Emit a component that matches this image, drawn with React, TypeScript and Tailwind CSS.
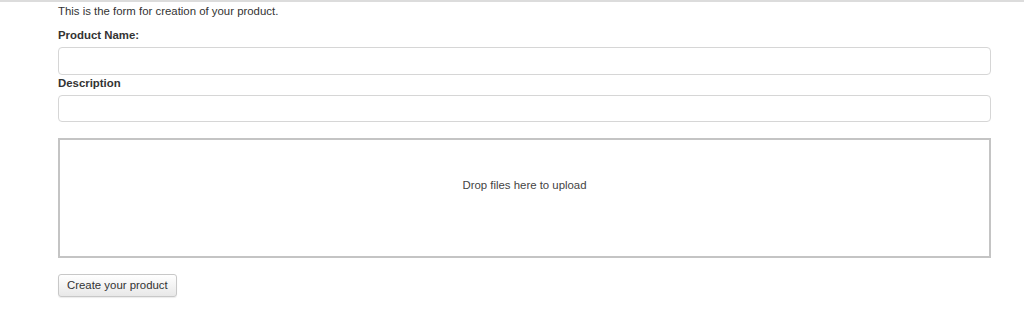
import React, { useState } from "react";

const App: React.FC = () => {
  const [name, setName] = useState("");
  const [description, setDescription] = useState("");

  return (
    <div className="min-h-[314px] bg-white font-['Liberation_Sans',Arial,sans-serif] text-[11.4px] text-[#333]">
      <div className="h-[2px] bg-[#dcdcdc]" />
      <form
        onSubmit={(e) => e.preventDefault()}
        className="ml-[58px] w-[933px] pb-4"
      >
        <p className="leading-[18px]">This is the form for creation of your product.</p>

        <label className="mt-[7px] block font-bold leading-[16px]">Product Name:</label>
        <input
          type="text"
          value={name}
          onChange={(e) => setName(e.target.value)}
          className="mt-[4px] block h-[28px] w-full rounded-[4px] border border-[#d6d6d6] px-2 outline-none"
        />

        <label className="block font-bold leading-[16px]">Description</label>
        <input
          type="text"
          value={description}
          onChange={(e) => setDescription(e.target.value)}
          className="mt-[4px] block h-[27px] w-full rounded-[4px] border border-[#d6d6d6] px-2 outline-none"
        />

        <div className="mt-[16px] h-[120px] border-2 border-[#c4c4c4] pt-[36px] text-center leading-[18px] text-[#444]">
          Drop files here to upload
        </div>

        <button
          type="submit"
          className="mt-[16px] h-[23px] rounded-[3px] border border-[#c8c8c8] bg-gradient-to-b from-white to-[#e8e8e8] px-[8px] text-[#333] shadow-[0_1px_1px_rgba(0,0,0,0.08)]"
        >
          Create your product
        </button>
      </form>
    </div>
  );
};

export default App;
